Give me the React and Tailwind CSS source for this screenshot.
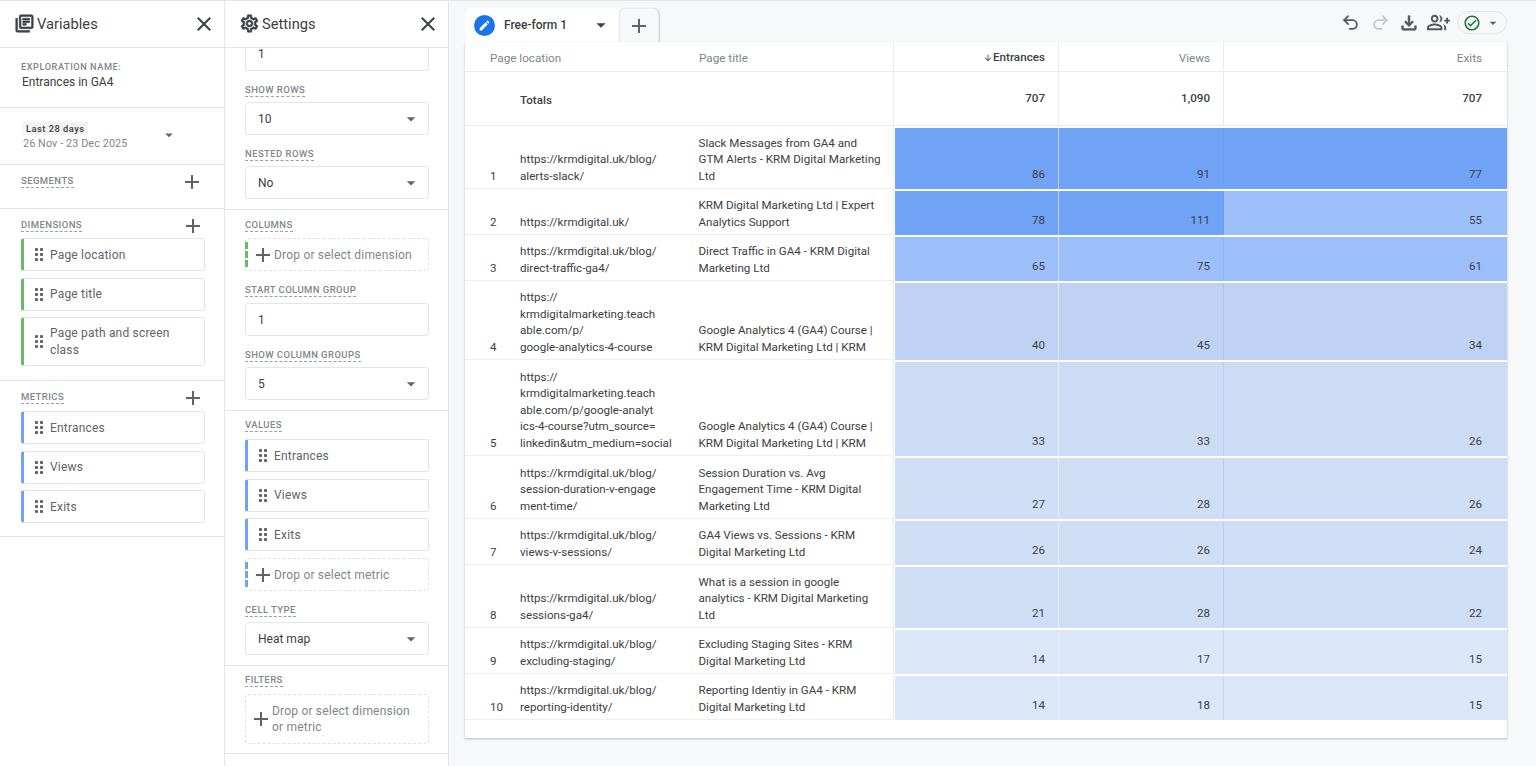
import React from "react";
import {
  MdClose,
  MdAdd,
  MdArrowDropDown,
  MdEdit,
  MdOutlineGroupAdd,
  MdOutlineCheckCircle,
  MdArrowDownward,
} from "react-icons/md";
import { Undo2, Redo2 } from "lucide-react";

function Bold({ d, size, className }) {
  return (
    <svg
      width={size}
      height={size}
      viewBox="0 0 24 24"
      fill="currentColor"
      stroke="currentColor"
      strokeWidth="0.6"
      className={className}
    >
      <path d={d} />
    </svg>
  );
}

const libraryPath =
  "M4 6H2v14c0 1.1.9 2 2 2h14v-2H4V6zm16-4H8c-1.1 0-2 .9-2 2v12c0 1.1.9 2 2 2h12c1.1 0 2-.9 2-2V4c0-1.1-.9-2-2-2zm0 14H8V4h12v12zM10 9h8v2h-8zm0 3h4v2h-4zm0-6h8v2h-8z";
const settingsPath =
  "M19.43 12.98c.04-.32.07-.64.07-.98 0-.34-.03-.66-.07-.98l2.11-1.65c.19-.15.24-.42.12-.64l-2-3.46c-.09-.16-.26-.25-.44-.25-.06 0-.12.01-.17.03l-2.49 1c-.52-.4-1.08-.73-1.69-.98l-.38-2.65C14.46 2.18 14.25 2 14 2h-4c-.25 0-.46.18-.49.42l-.38 2.65c-.61.25-1.17.59-1.69.98l-2.49-1c-.06-.02-.12-.03-.18-.03-.17 0-.34.09-.43.25l-2 3.46c-.13.22-.07.49.12.64l2.11 1.65c-.04.32-.07.65-.07.98 0 .33.03.66.07.98l-2.11 1.65c-.19.15-.24.42-.12.64l2 3.46c.09.16.26.25.44.25.06 0 .12-.01.17-.03l2.49-1c.52.4 1.08.73 1.69.98l.38 2.65c.03.24.24.42.49.42h4c.25 0 .46-.18.49-.42l.38-2.65c.61-.25 1.17-.59 1.69-.98l2.49 1c.06.02.12.03.18.03.17 0 .34-.09.43-.25l2-3.46c.12-.22.07-.49-.12-.64l-2.11-1.65zm-1.98-1.71c.04.31.05.52.05.73 0 .21-.02.43-.05.73l-.14 1.13.89.7 1.08.84-.7 1.21-1.27-.51-1.04-.42-.9.68c-.43.32-.84.56-1.25.73l-1.06.43-.16 1.13-.2 1.35h-1.4l-.19-1.35-.16-1.13-1.06-.43c-.43-.18-.83-.41-1.23-.71l-.91-.7-1.06.43-1.27.51-.7-1.21 1.08-.84.89-.7-.14-1.13c-.03-.31-.05-.54-.05-.74s.02-.43.05-.73l.14-1.13-.89-.7-1.08-.84.7-1.21 1.27.51 1.04.42.9-.68c.43-.32.84-.56 1.25-.73l1.06-.43.16-1.13.2-1.35h1.39l.19 1.35.16 1.13 1.06.43c.43.18.83.41 1.23.71l.91.7 1.06-.43 1.27-.51.7 1.21-1.07.85-.89.7.14 1.13zM12 8c-2.21 0-4 1.79-4 4s1.79 4 4 4 4-1.79 4-4-1.79-4-4-4zm0 6c-1.1 0-2-.9-2-2s.9-2 2-2 2 .9 2 2-.9 2-2 2z";
const downloadPath =
  "M18 15v3H6v-3H4v3c0 1.1.9 2 2 2h12c1.1 0 2-.9 2-2v-3h-2zm-1-4l-1.41-1.41L13 12.17V4h-2v8.17L8.41 9.59 7 11l5 5 5-5z";

function Label({ children }) {
  return (
    <span className="inline-block border-b border-dashed border-[#9aa0a6] text-[9.5px] leading-[12px] font-medium tracking-[0.42px] text-[#80868b]">
      {children}
    </span>
  );
}

function Dots() {
  return (
    <svg width="8" height="13" viewBox="0 0 8 13" className="shrink-0 text-[#5f6368]" fill="currentColor">
      <rect x="0" y="0" width="3" height="3" rx="0.8" />
      <rect x="5" y="0" width="3" height="3" rx="0.8" />
      <rect x="0" y="5" width="3" height="3" rx="0.8" />
      <rect x="5" y="5" width="3" height="3" rx="0.8" />
      <rect x="0" y="10" width="3" height="3" rx="0.8" />
      <rect x="5" y="10" width="3" height="3" rx="0.8" />
    </svg>
  );
}

function Chip({ children, kind, tall }) {
  return (
    <div
      className={`flex items-center rounded-[3px] border border-[#e3e5e8] border-l-[3px] pl-[11px] pr-2 gap-[7px] text-[12px] leading-[16.4px] tracking-[0.2px] text-[#5f6368] ${
        tall ? "h-[49px]" : "h-[33px]"
      } ${kind === "green" ? "border-l-[#66bb6a]" : "border-l-[#6fa2f6]"}`}
    >
      <Dots />
      <span className={tall ? "" : "pt-px"}>{children}</span>
    </div>
  );
}

function Drop({ children, kind }) {
  const bar = kind === "green" ? "bg-[#66bb6a]" : "bg-[#6fa2f6]";
  return (
    <div className="flex h-[33px] items-center rounded-[3px] border border-dashed border-[#e0e0e0]">
      <div className="flex h-full w-[3px] flex-col justify-between py-[3px] -ml-px shrink-0">
        <div className={`h-[7px] ${bar}`} />
        <div className={`h-[7px] ${bar}`} />
        <div className={`h-[7px] ${bar}`} />
      </div>
      <MdAdd size={24} className="ml-[3px] shrink-0 text-[#5f6368]" />
      <span className="ml-[-1px] pt-px text-[12px] tracking-[0.2px] text-[#80868b]">{children}</span>
    </div>
  );
}

function Select({ children }) {
  return (
    <div className="flex h-[33px] items-center justify-between rounded-[3px] border border-[#e3e5e8] pl-[12px] pr-[7px] text-[12px] text-[#3c4043]">
      <span>{children}</span>
      <MdArrowDropDown size={20} className="text-[#5f6368]" />
    </div>
  );
}

function Input({ children }) {
  return (
    <div className="flex h-[33px] items-center rounded-[3px] border border-[#e3e5e8] pl-[12px] text-[12px] text-[#3c4043]">
      {children}
    </div>
  );
}

function PanelHead({ icon, title }) {
  return (
    <div className="flex h-[47px] shrink-0 items-center justify-between border-b border-[#e3e5e8] pl-[14px] pr-[8px]">
      <div className="flex items-center gap-[2px] text-[14.7px] text-[#3c4043]">
        {icon}
        <span>{title}</span>
      </div>
      <MdClose size={24} className="text-[#3c4043]" />
    </div>
  );
}

function AddRow({ label }) {
  return (
    <div className="flex h-[13px] items-center justify-between">
      <Label>{label}</Label>
      <MdAdd size={24} className="text-[#5f6368]" />
    </div>
  );
}

function VariablesPanel() {
  return (
    <aside className="flex h-full w-[225px] shrink-0 flex-col border-r border-[#e3e5e8] bg-white">
      <PanelHead title="Variables" icon={<Bold d={libraryPath} size={21} className="text-[#3c4043]" />} />
      <section className="h-[60px] border-b border-[#e3e5e8] pl-[21px] pt-[13px]">
        <div className="text-[9.2px] leading-[12px] font-medium tracking-[0.55px] text-[#80868b]">EXPLORATION NAME:</div>
        <div className="mt-[1px] ml-px text-[12px] leading-[17px] text-[#3c4043]">Entrances in GA4</div>
      </section>
      <section className="relative h-[57px] border-b border-[#e3e5e8] pl-[23px] pt-[14px]">
        <div className="flex h-[13px] w-fit items-center bg-[#f1f3f4] px-[3px] text-[9.3px] font-medium tracking-[0.5px] text-[#3c4043]">
          Last 28 days
        </div>
        <div className="mt-[1px] text-[10.8px] leading-[15px] tracking-[0.1px] text-[#80868b]">26 Nov - 23 Dec 2025</div>
        <MdArrowDropDown size={18} className="absolute left-[160px] top-[18px] text-[#5f6368]" />
      </section>
      <section className="h-[44px] border-b border-[#e3e5e8] pl-[21px] pr-[20px] pt-[10px]">
        <AddRow label="SEGMENTS" />
      </section>
      <section className="h-[172px] border-b border-[#e3e5e8] pl-[21px] pr-[19px] pt-[10px]">
        <AddRow label="DIMENSIONS" />
        <div className="mt-[6px] flex flex-col gap-[6.7px]">
          <Chip kind="green">Page location</Chip>
          <Chip kind="green">Page title</Chip>
          <Chip kind="green" tall>
            Page path and screen
            <br />
            class
          </Chip>
        </div>
      </section>
      <section className="h-[156px] border-b border-[#e3e5e8] pl-[21px] pr-[19px] pt-[10px]">
        <AddRow label="METRICS" />
        <div className="mt-[7px] flex flex-col gap-[6.7px]">
          <Chip kind="blue">Entrances</Chip>
          <Chip kind="blue">Views</Chip>
          <Chip kind="blue">Exits</Chip>
        </div>
      </section>
    </aside>
  );
}

function SettingsPanel() {
  return (
    <aside className="flex h-full w-[224px] shrink-0 flex-col border-r border-[#e3e5e8] bg-white">
      <PanelHead title="Settings" icon={<Bold d={settingsPath} size={21} className="text-[#3c4043]" />} />
      <section className="h-[162px] border-b border-[#e3e5e8] pl-[20px] pr-[19px]">
        <div className="flex h-[23px] items-start rounded-b-[3px] border border-t-0 border-[#e3e5e8] pl-[12px] text-[12px] leading-[12px] text-[#3c4043]">
          1
        </div>
        <div className="mt-[13px] flex">
          <Label>SHOW ROWS</Label>
        </div>
        <div className="mt-[5px]">
          <Select>10</Select>
        </div>
        <div className="mt-[13px] flex">
          <Label>NESTED ROWS</Label>
        </div>
        <div className="mt-[5px]">
          <Select>No</Select>
        </div>
      </section>
      <section className="h-[201px] border-b border-[#e3e5e8] pl-[20px] pr-[19px] pt-[9px]">
        <div className="flex">
          <Label>COLUMNS</Label>
        </div>
        <div className="mt-[6px]">
          <Drop kind="green">Drop or select dimension</Drop>
        </div>
        <div className="mt-[13px] flex">
          <Label>START COLUMN GROUP</Label>
        </div>
        <div className="mt-[6px]">
          <Input>1</Input>
        </div>
        <div className="mt-[13px] flex">
          <Label>SHOW COLUMN GROUPS</Label>
        </div>
        <div className="mt-[5px]">
          <Select>5</Select>
        </div>
      </section>
      <section className="h-[255px] border-b border-[#e3e5e8] pl-[20px] pr-[19px] pt-[8px]">
        <div className="flex">
          <Label>VALUES</Label>
        </div>
        <div className="mt-[7px] flex flex-col gap-[6.7px]">
          <Chip kind="blue">Entrances</Chip>
          <Chip kind="blue">Views</Chip>
          <Chip kind="blue">Exits</Chip>
          <Drop kind="blue">Drop or select metric</Drop>
        </div>
        <div className="mt-[13px] flex">
          <Label>CELL TYPE</Label>
        </div>
        <div className="mt-[5px]">
          <Select>Heat map</Select>
        </div>
      </section>
      <section className="h-[88px] border-b border-[#e3e5e8] pl-[20px] pr-[19px] pt-[8px]">
        <div className="flex">
          <Label>FILTERS</Label>
        </div>
        <div className="mt-[7px] flex h-[50px] items-center rounded-[3px] border border-dashed border-[#e0e0e0]">
          <MdAdd size={24} className="ml-[3px] shrink-0 text-[#5f6368]" />
          <span className="-ml-px text-[12px] leading-[16.4px] tracking-[0.2px] text-[#80868b]">
            Drop or select dimension
            <br />
            or metric
          </span>
        </div>
      </section>
    </aside>
  );
}

const rows = [
  { h: "h-[63px]", loc: ["https://krmdigital.uk/blog/", "alerts-slack/"], title: ["Slack Messages from GA4 and", "GTM Alerts - KRM Digital Marketing", "Ltd"], vals: [["86", "bg-[#70a2f6]"], ["91", "bg-[#70a2f6]"], ["77", "bg-[#70a2f6]"]] },
  { h: "h-[46px]", loc: ["https://krmdigital.uk/"], title: ["KRM Digital Marketing Ltd | Expert", "Analytics Support"], vals: [["78", "bg-[#70a2f6]"], ["111", "bg-[#70a2f6]"], ["55", "bg-[#9cbef9]"]] },
  { h: "h-[46px]", loc: ["https://krmdigital.uk/blog/", "direct-traffic-ga4/"], title: ["Direct Traffic in GA4 - KRM Digital", "Marketing Ltd"], vals: [["65", "bg-[#9cbef9]"], ["75", "bg-[#9cbef9]"], ["61", "bg-[#9cbef9]"]] },
  { h: "h-[79px]", loc: ["https://", "krmdigitalmarketing.teach", "able.com/p/", "google-analytics-4-course"], title: ["Google Analytics 4 (GA4) Course |", "KRM Digital Marketing Ltd | KRM"], vals: [["40", "bg-[#c0d2f3]"], ["45", "bg-[#c0d2f3]"], ["34", "bg-[#c0d2f3]"]] },
  { h: "h-[96px]", loc: ["https://", "krmdigitalmarketing.teach", "able.com/p/google-analyt", "ics-4-course?utm_source=", "linkedin&utm_medium=social"], title: ["Google Analytics 4 (GA4) Course |", "KRM Digital Marketing Ltd | KRM"], vals: [["33", "bg-[#ccdcf5]"], ["33", "bg-[#ccdcf5]"], ["26", "bg-[#ccdcf5]"]] },
  { h: "h-[63px]", loc: ["https://krmdigital.uk/blog/", "session-duration-v-engage", "ment-time/"], title: ["Session Duration vs. Avg", "Engagement Time - KRM Digital", "Marketing Ltd"], vals: [["27", "bg-[#cfdef5]"], ["28", "bg-[#cfdef5]"], ["26", "bg-[#cfdef5]"]] },
  { h: "h-[46px]", loc: ["https://krmdigital.uk/blog/", "views-v-sessions/"], title: ["GA4 Views vs. Sessions - KRM", "Digital Marketing Ltd"], vals: [["26", "bg-[#cfdef5]"], ["26", "bg-[#cfdef5]"], ["24", "bg-[#cfdef5]"]] },
  { h: "h-[63px]", loc: ["https://krmdigital.uk/blog/", "sessions-ga4/"], title: ["What is a session in google", "analytics - KRM Digital Marketing", "Ltd"], vals: [["21", "bg-[#cfdef5]"], ["28", "bg-[#cfdef5]"], ["22", "bg-[#cfdef5]"]] },
  { h: "h-[46px]", loc: ["https://krmdigital.uk/blog/", "excluding-staging/"], title: ["Excluding Staging Sites - KRM", "Digital Marketing Ltd"], vals: [["14", "bg-[#dbe6f8]"], ["17", "bg-[#dbe6f8]"], ["15", "bg-[#dbe6f8]"]] },
  { h: "h-[46px]", loc: ["https://krmdigital.uk/blog/", "reporting-identity/"], title: ["Reporting Identiy in GA4 - KRM", "Digital Marketing Ltd"], vals: [["14", "bg-[#dbe6f8]"], ["18", "bg-[#dbe6f8]"], ["15", "bg-[#dbe6f8]"]] },
];

function Lines({ lines }) {
  return lines.map((l) => (
    <span key={l} className="block whitespace-nowrap">
      {l}
    </span>
  ));
}

function DataTable() {
  const headCell = "border-b border-[#e8eaed] pt-[4px] text-[11.7px] font-normal text-[#80868b]";
  const metricBorder = "border-r border-[#e8eaed]";
  return (
    <table className="w-full table-fixed border-separate border-spacing-0 text-[11.6px] text-[#3c4043]">
      <colgroup>
        <col className="w-[55px]" />
        <col className="w-[178px]" />
        <col className="w-[196px]" />
        <col className="w-[165px]" />
        <col className="w-[165px]" />
        <col />
      </colgroup>
      <thead>
        <tr className="h-[30px]">
          <th className={`${headCell} pl-[25px] text-left whitespace-nowrap`} colSpan={2}>
            Page location
          </th>
          <th className={`${headCell} border-r border-r-[#e8eaed] pl-px text-left`}>Page title</th>
          <th className={`${headCell} ${metricBorder} pr-[13px] text-right`}>
            <span className="inline-flex items-center font-medium text-[#3c4043]">
              <MdArrowDownward size={10} />
              Entrances
            </span>
          </th>
          <th className={`${headCell} ${metricBorder} pr-[13px] text-right`}>Views</th>
          <th className={`${headCell} pr-[25px] text-right`}>Exits</th>
        </tr>
      </thead>
      <tbody>
        <tr className="h-[54px]">
          <td className="border-b border-[#e8eaed]" />
          <td className="border-b border-[#e8eaed] pt-[4px] font-medium">Totals</td>
          <td className="border-b border-r border-[#e8eaed]" />
          <td className="border-b border-r border-[#e8eaed] pr-[13px] text-right font-medium">707</td>
          <td className="border-b border-r border-[#e8eaed] pr-[13px] text-right font-medium">1,090</td>
          <td className="border-b border-[#e8eaed] pr-[25px] text-right font-medium">707</td>
        </tr>
        {rows.map((r, i) => (
          <tr key={i} className={r.h}>
            <td className="border-b border-[#eeeeee] pb-[4px] pl-[25px] align-bottom leading-[16.4px]">{i + 1}</td>
            <td className="border-b border-[#eeeeee] pb-[4px] align-bottom leading-[16.4px]">
              <Lines lines={r.loc} />
            </td>
            <td className="border-b border-r border-[#eeeeee] pb-[4px] pl-[0.5px] align-bottom leading-[16.4px]">
              <Lines lines={r.title} />
            </td>
            {r.vals.map(([v, bg], j) => (
              <td key={j} className="h-[inherit] p-0 pt-[2px] align-bottom">
                <div
                  className={`flex h-full min-h-[43px] items-end justify-end ${bg} ${j === 2 ? "pr-[25px]" : "pr-[13px]"} ${
                    j === 0 ? "ml-px border-r border-white/50" : j === 1 ? "border-r border-[#5f8fe0]/20" : ""
                  } pb-[8px] leading-[14px]`}
                >
                  {v}
                </div>
              </td>
            ))}
          </tr>
        ))}
      </tbody>
    </table>
  );
}

function Main() {
  return (
    <main className="flex min-w-0 flex-1 flex-col pl-[16px] pr-[29px]">
      <div className="flex h-[41px] shrink-0 items-end justify-between">
        <div className="flex items-end">
          <div className="flex h-[34px] w-[153px] items-center rounded-t-[6px] bg-white pl-[9px] pr-[6px]">
            <span className="flex h-[21px] w-[21px] items-center justify-center rounded-full bg-[#1a73e8]">
              <MdEdit size={13} className="text-white" />
            </span>
            <span className="ml-[9px] flex-1 text-[12px] font-medium text-[#3c4043]">Free-form 1</span>
            <MdArrowDropDown size={22} className="text-[#3c4043]" />
          </div>
          <div className="ml-px flex h-[34px] w-[40px] items-center justify-center rounded-t-[6px] border border-b-0 border-[#e8eaed] bg-[#f6f8f9] shadow-[1px_0_1px_rgba(60,64,67,0.2)]">
            <MdAdd size={24} className="text-[#5f6368]" />
          </div>
        </div>
        <div className="flex items-center self-start pt-[10px]">
          <Undo2 size={19} strokeWidth={2.2} className="text-[#54585d]" />
          <Redo2 size={19} strokeWidth={2.2} className="ml-[11px] text-[#c4c7cb]" />
          <Bold d={downloadPath} size={22} className="ml-[8px] text-[#54585d]" />
          <MdOutlineGroupAdd size={23} className="ml-[7px] text-[#54585d]" />
          <div className="ml-[7px] flex h-[23px] w-[50px] items-center rounded-full border border-[#e3e5e8] pl-[5px]">
            <MdOutlineCheckCircle size={18} className="text-[#137333]" />
            <MdArrowDropDown size={16} className="ml-[4px] text-[#5f6368]" />
          </div>
        </div>
      </div>
      <div className="h-[696px] shrink-0 bg-white shadow-[0_1px_2px_rgba(60,64,67,0.35)]">
        <DataTable />
      </div>
    </main>
  );
}

export default function App() {
  return (
    <div className="flex h-[766px] w-full overflow-hidden border-t border-[#e3e5e8] bg-[#f6f8f9] font-[Roboto,sans-serif]">
      <VariablesPanel />
      <SettingsPanel />
      <Main />
    </div>
  );
}
